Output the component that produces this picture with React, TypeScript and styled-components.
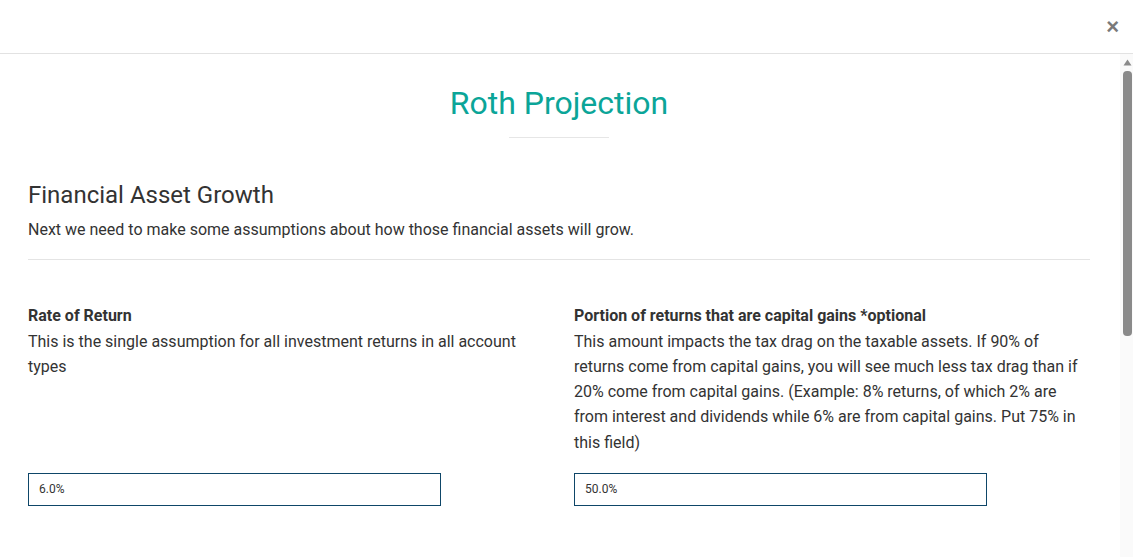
import React from 'react';
import styled, { createGlobalStyle } from 'styled-components';

const GlobalStyle = createGlobalStyle`
	html, body {
		margin: 0;
		padding: 0;
		height: 100%;
		overflow: hidden;
		background: #fff;
		font-family: Roboto, "Liberation Sans", Arial, sans-serif;
		color: #333;
	}
`;

const Modal = styled.div`
	display: flex;
	flex-direction: column;
	height: 100vh;
	background: #fff;
`;

const Header = styled.header`
	flex: 0 0 auto;
	height: 53px;
	border-bottom: 1px solid #e2e2e2;
	display: flex;
	align-items: center;
	justify-content: flex-end;
	padding: 0 14px;
`;

const CloseButton = styled.button`
	border: 0;
	background: none;
	padding: 0;
	font-family: Arial, "Liberation Sans", sans-serif;
	font-size: 22px;
	font-weight: 700;
	line-height: 1;
	color: #7a7a7a;
	cursor: pointer;
`;

const Main = styled.div`
	flex: 1 1 auto;
	display: flex;
	min-height: 0;
`;

const Body = styled.div`
	flex: 1 1 auto;
	overflow: hidden;
`;

/* scrollbar rail, drawn since the headless page hides native scrollbars */
const Rail = styled.div`
	flex: 0 0 13px;
	background: #fafafa;
	display: flex;
	flex-direction: column;
	align-items: center;
	padding: 5px 0 0 1px;
	box-sizing: border-box;
`;

const ArrowUp = styled.svg`
	width: 9px;
	height: 7px;
	fill: #8a8a8a;
`;

const Thumb = styled.div`
	margin-top: 5px;
	width: 9px;
	height: 265px;
	border-radius: 4px;
	background: #8a8a8a;
`;

const Content = styled.div`
	padding: 27px 30px 0 28px;
`;

const Title = styled.h1`
	margin: 0;
	text-align: center;
	font-size: 32px;
	font-weight: 400;
	line-height: 44px;
	color: #0ba598;
`;

const TitleRule = styled.hr`
	width: 100px;
	height: 1px;
	border: 0;
	background: #e6e6e6;
	margin: 12px auto 0;
`;

const SectionTitle = styled.h2`
	margin: 42px 0 0;
	font-size: 24px;
	font-weight: 400;
	line-height: 30px;
	color: #333;
`;

const Intro = styled.p`
	margin: 7px 0 0;
	font-size: 16px;
	line-height: 26px;
`;

const Divider = styled.hr`
	height: 1px;
	border: 0;
	background: #e4e4e4;
	margin: 16px 0 0;
`;

const FieldGrid = styled.div`
	display: grid;
	grid-template-columns: 1fr 1fr;
	column-gap: 30px;
	margin-top: 43px;
`;

const Field = styled.div`
	display: flex;
	flex-direction: column;
`;

const Label = styled.div`
	font-size: 16px;
	font-weight: 700;
	line-height: 25.5px;
	color: #333;
`;

const Help = styled.p`
	margin: 0;
	font-size: 16px;
	line-height: 25.3px;
	color: #333;
`;

const InputSpacer = styled.div`
	flex: 1 0 18px;
`;

const Input = styled.input`
	width: 80%;
	height: 33px;
	box-sizing: border-box;
	border: 1px solid #0e4668;
	border-radius: 0;
	padding: 0 10px;
	font-family: Roboto, "Liberation Sans", Arial, sans-serif;
	font-size: 12px;
	color: #333;
	outline: none;
	background: #fff;
`;

type FieldSpec = { label: string; help: string; value: string };

const fields: FieldSpec[] = [
	{
		label: 'Rate of Return',
		help: 'This is the single assumption for all investment returns in all account types',
		value: '6.0%',
	},
	{
		label: 'Portion of returns that are capital gains *optional',
		help: 'This amount impacts the tax drag on the taxable assets. If 90% of returns come from capital gains, you will see much less tax drag than if 20% come from capital gains. (Example: 8% returns, of which 2% are from interest and dividends while 6% are from capital gains. Put 75% in this field)',
		value: '50.0%',
	},
];

export default function App() {
	return (
		<>
			<GlobalStyle />
			<Modal>
				<Header>
					<CloseButton aria-label="Close">×</CloseButton>
				</Header>
				<Main>
					<Body>
						<Content>
							<Title>Roth Projection</Title>
							<TitleRule />
							<SectionTitle>Financial Asset Growth</SectionTitle>
							<Intro>
								Next we need to make some assumptions about how those financial assets will grow.
							</Intro>
							<Divider />
							<FieldGrid>
								{fields.map((f) => (
									<Field key={f.label}>
										<Label>{f.label}</Label>
										<Help>{f.help}</Help>
										<InputSpacer />
										<Input defaultValue={f.value} />
									</Field>
								))}
							</FieldGrid>
						</Content>
					</Body>
					<Rail>
						<ArrowUp viewBox="0 0 9 7">
							<path d="M4.5 0.5 L8.5 6.5 L0.5 6.5 Z" />
						</ArrowUp>
						<Thumb />
					</Rail>
				</Main>
			</Modal>
		</>
	);
}
